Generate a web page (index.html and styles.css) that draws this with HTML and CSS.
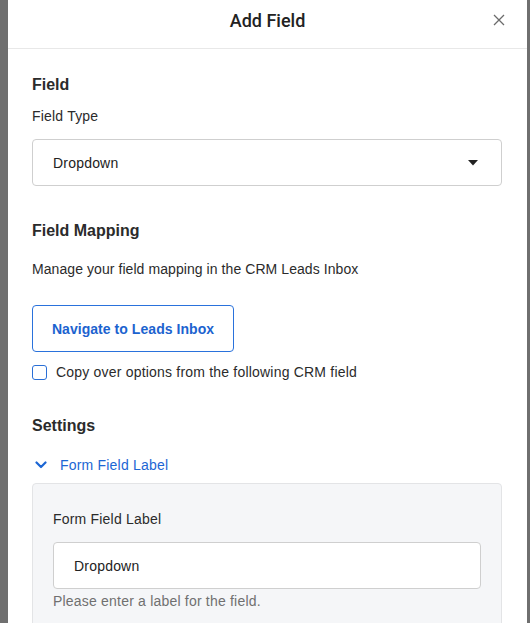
FILE: index.html
```html
<!DOCTYPE html>
<html>
<head>
<meta charset="utf-8">
<link rel="stylesheet" href="styles.css">
</head>
<body>
<div class="backdrop">
  <div class="modal">
    <div class="modal-header">
      <div class="title">Add Field</div>
      <button class="close" aria-label="Close">
        <svg width="12" height="12" viewBox="0 0 12 12"><path d="M1 1L11 11M11 1L1 11" stroke="#6b6b6b" stroke-width="1.3" fill="none"/></svg>
      </button>
    </div>
    <div class="modal-body">
      <h2 class="section-title first">Field</h2>
      <div class="label">Field Type</div>
      <div class="select">
        <span>Dropdown</span>
        <svg class="caret" width="10" height="6" viewBox="0 0 10 6"><path d="M0 0H10L5 5.5Z" fill="#222"/></svg>
      </div>

      <h2 class="section-title">Field Mapping</h2>
      <p class="desc">Manage your field mapping in the CRM Leads Inbox</p>
      <button class="btn-outline">Navigate to Leads Inbox</button>
      <label class="check-row">
        <span class="checkbox"></span>
        <span>Copy over options from the following CRM field</span>
      </label>

      <h2 class="section-title settings">Settings</h2>
      <div class="accordion">
        <svg class="chev" width="12" height="8" viewBox="0 0 12 8"><path d="M1.5 1.5L6 6L10.5 1.5" stroke="#1c66d4" stroke-width="2.2" fill="none" stroke-linecap="round" stroke-linejoin="round"/></svg>
        <span>Form Field Label</span>
      </div>
      <div class="panel">
        <div class="label">Form Field Label</div>
        <div class="input">Dropdown</div>
        <div class="help">Please enter a label for the field.</div>
      </div>
    </div>
  </div>
</div>
</body>
</html>
```

FILE: styles.css
```css
* { box-sizing: border-box; }
html, body {
  margin: 0;
  padding: 0;
  height: 100%;
  overflow: hidden;
}
body {
  font-family: "Liberation Sans", Arial, sans-serif;
  color: #2b2b2b;
  background: #6f6f6f;
  letter-spacing: 0.2px;
}
.backdrop {
  height: 100%;
  padding-left: 8px;
  padding-right: 3px;
}
.modal {
  background: #fff;
  height: 100%;
  width: 519px;
}
.modal-header {
  height: 49px;
  border-bottom: 1px solid #e8e8e8;
  display: flex;
  align-items: center;
  justify-content: center;
  position: relative;
}
.title {
  font-family: Roboto, "Liberation Sans", sans-serif;
  font-size: 18px;
  font-weight: 500;
  letter-spacing: 0;
  color: #222;
  margin-top: -7px;
}
.close {
  position: absolute;
  right: 22px;
  top: 14px;
  border: 0;
  background: none;
  padding: 0;
  width: 12px;
  height: 12px;
  display: flex;
}
.modal-body {
  padding: 26px 25px 0 24px;
}
.section-title {
  margin: 35px 0 0;
  font-size: 16px;
  line-height: 20px;
  font-weight: 700;
  letter-spacing: 0;
  color: #2b2b2b;
}
.section-title.first { margin-top: 0; }
.section-title.settings { margin-top: 34px; }
.label {
  margin-top: 11px;
  font-size: 14px;
  line-height: 20px;
  color: #2b2b2b;
}
.select {
  margin-top: 13px;
  height: 47px;
  border: 1px solid #cfcfcf;
  border-radius: 4px;
  display: flex;
  align-items: center;
  justify-content: space-between;
  padding: 0 23px 0 20px;
  font-size: 14px;
  color: #222;
}
.caret { margin-top: 1px; }
.desc {
  margin: 18px 0 0;
  font-size: 14px;
  line-height: 20px;
  letter-spacing: 0.07px;
}
.btn-outline {
  margin-top: 26px;
  height: 47px;
  width: 202px;
  border: 1px solid #2a72dc;
  border-radius: 4px;
  background: #fff;
  color: #1c63cf;
  font-family: inherit;
  font-size: 14px;
  font-weight: 700;
  letter-spacing: 0.05px;
  display: block;
  padding: 0;
}
.check-row {
  margin-top: 10px;
  display: flex;
  align-items: center;
  font-size: 14px;
  line-height: 20px;
  gap: 9px;
}
.checkbox {
  width: 15px;
  height: 15px;
  border: 1.5px solid #2a6fd6;
  border-radius: 3px;
  display: inline-block;
  flex: none;
}
.accordion {
  margin-top: 19px;
  display: flex;
  align-items: center;
  gap: 13px;
  padding-left: 3px;
  font-size: 14px;
  line-height: 20px;
  color: #1c66d4;
}
.chev { margin-top: -1px; }
.panel {
  margin-top: 8px;
  background: #f5f6f8;
  border: 1px solid #e3e4e6;
  border-radius: 4px;
  padding: 25px 20px 30px;
}
.panel .label { margin-top: 0; }
.input {
  margin-top: 13px;
  height: 47px;
  background: #fff;
  border: 1px solid #cfcfcf;
  border-radius: 4px;
  display: flex;
  align-items: center;
  padding-left: 20px;
  font-size: 14px;
  color: #222;
}
.help {
  margin-top: 2px;
  font-size: 14px;
  line-height: 20px;
  color: #707070;
}
```
